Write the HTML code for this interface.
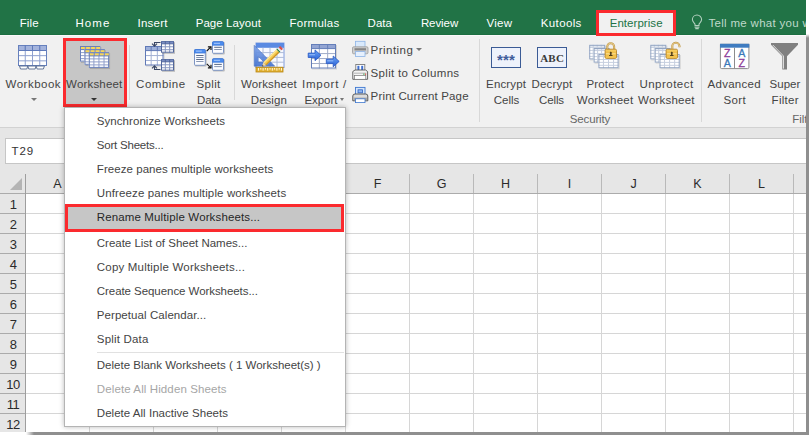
<!DOCTYPE html>
<html><head><meta charset="utf-8"><title>Excel</title>
<style>
html,body{margin:0;padding:0;background:#fff;}
body{width:809px;height:435px;overflow:hidden;position:relative;font-family:"Liberation Sans",sans-serif;}
#app{position:absolute;left:0;top:0;width:806px;height:432px;overflow:hidden;background:#fff;}
#app div{box-sizing:border-box;}
.t{position:absolute;white-space:pre;line-height:16px;height:16px;font-family:"Liberation Sans",sans-serif;}
.z{z-index:6;}
.ch{position:absolute;top:174px;width:64px;height:19px;line-height:20px;text-align:center;font-size:12.5px;color:#2b2b2b;}
.rn{position:absolute;left:0;width:26px;height:19px;line-height:22px;text-align:center;font-size:13px;letter-spacing:-0.5px;color:#2b2b2b;}
.sep{position:absolute;width:1px;background:#d8d8d8;}
.arr{position:absolute;width:0;height:0;border-left:3px solid transparent;border-right:3px solid transparent;border-top:3px solid #666;}
</style></head><body>
<!-- drop shadow of the screenshot -->
<div style="position:absolute;left:806px;top:34px;width:3px;height:401px;background:linear-gradient(#ffffff 0px,#8f8f8f 4px,#8f8f8f 100%)"></div>
<div style="position:absolute;left:26px;top:432px;width:783px;height:3px;background:linear-gradient(90deg,#ffffff 0px,#8f8f8f 8px,#8f8f8f 100%)"></div>
<div id="app">
<!-- title/tab bar -->
<div style="position:absolute;left:0;top:0;width:806px;height:35px;background:#217346"></div>
<div style="position:absolute;left:0;top:34px;width:806px;height:1px;background:#1c6e41"></div>
<!-- ribbon -->
<div style="position:absolute;left:0;top:35px;width:806px;height:92px;background:#f1f1f1"></div>
<div style="position:absolute;left:0;top:35px;width:806px;height:1px;background:#faf8f9"></div>
<div style="position:absolute;left:0;top:127px;width:806px;height:1px;background:#d2d2d2"></div>
<div style="position:absolute;left:0;top:128px;width:806px;height:66px;background:#e6e6e6"></div>
<!-- formula bar -->
<div style="position:absolute;left:5px;top:138px;width:801px;height:26px;background:#fff;border:1px solid #c6c6c6;border-right:none"></div>
<!-- header -->
<div style="position:absolute;left:0;top:193px;width:806px;height:1px;background:#ababab"></div>
<div style="position:absolute;left:0;top:194px;width:25px;height:238px;background:#e6e6e6"></div>
<div style="position:absolute;left:25px;top:174px;width:1px;height:258px;background:#9e9e9e"></div>
<div style="position:absolute;left:10px;top:178px;width:0;height:0;border-left:12px solid transparent;border-bottom:12px solid #b4b4b4"></div>
<div class="ch" style="left:25.5px">A</div>
<div class="ch" style="left:89.5px">B</div>
<div class="ch" style="left:153.5px">C</div>
<div class="ch" style="left:217.5px">D</div>
<div class="ch" style="left:281.5px">E</div>
<div class="ch" style="left:345.5px">F</div>
<div class="ch" style="left:409.5px">G</div>
<div class="ch" style="left:473.5px">H</div>
<div class="ch" style="left:537.5px">I</div>
<div class="ch" style="left:601.5px">J</div>
<div class="ch" style="left:665.5px">K</div>
<div class="ch" style="left:729.5px">L</div>
<div style="position:absolute;left:89px;top:174px;width:1px;height:19px;background:#b9b9b9"></div>
<div style="position:absolute;left:89px;top:194px;width:1px;height:238px;background:#d6d6d6"></div>
<div style="position:absolute;left:153px;top:174px;width:1px;height:19px;background:#b9b9b9"></div>
<div style="position:absolute;left:153px;top:194px;width:1px;height:238px;background:#d6d6d6"></div>
<div style="position:absolute;left:217px;top:174px;width:1px;height:19px;background:#b9b9b9"></div>
<div style="position:absolute;left:217px;top:194px;width:1px;height:238px;background:#d6d6d6"></div>
<div style="position:absolute;left:281px;top:174px;width:1px;height:19px;background:#b9b9b9"></div>
<div style="position:absolute;left:281px;top:194px;width:1px;height:238px;background:#d6d6d6"></div>
<div style="position:absolute;left:345px;top:174px;width:1px;height:19px;background:#b9b9b9"></div>
<div style="position:absolute;left:345px;top:194px;width:1px;height:238px;background:#d6d6d6"></div>
<div style="position:absolute;left:409px;top:174px;width:1px;height:19px;background:#b9b9b9"></div>
<div style="position:absolute;left:409px;top:194px;width:1px;height:238px;background:#d6d6d6"></div>
<div style="position:absolute;left:473px;top:174px;width:1px;height:19px;background:#b9b9b9"></div>
<div style="position:absolute;left:473px;top:194px;width:1px;height:238px;background:#d6d6d6"></div>
<div style="position:absolute;left:537px;top:174px;width:1px;height:19px;background:#b9b9b9"></div>
<div style="position:absolute;left:537px;top:194px;width:1px;height:238px;background:#d6d6d6"></div>
<div style="position:absolute;left:601px;top:174px;width:1px;height:19px;background:#b9b9b9"></div>
<div style="position:absolute;left:601px;top:194px;width:1px;height:238px;background:#d6d6d6"></div>
<div style="position:absolute;left:665px;top:174px;width:1px;height:19px;background:#b9b9b9"></div>
<div style="position:absolute;left:665px;top:194px;width:1px;height:238px;background:#d6d6d6"></div>
<div style="position:absolute;left:729px;top:174px;width:1px;height:19px;background:#b9b9b9"></div>
<div style="position:absolute;left:729px;top:194px;width:1px;height:238px;background:#d6d6d6"></div>
<div style="position:absolute;left:793px;top:174px;width:1px;height:19px;background:#b9b9b9"></div>
<div style="position:absolute;left:793px;top:194px;width:1px;height:238px;background:#d6d6d6"></div>
<div style="position:absolute;left:26px;top:213px;width:780px;height:1px;background:#d6d6d6"></div>
<div style="position:absolute;left:0;top:213px;width:25px;height:1px;background:#ababab"></div>
<div class="rn" style="top:194px">1</div>
<div style="position:absolute;left:26px;top:233px;width:780px;height:1px;background:#d6d6d6"></div>
<div style="position:absolute;left:0;top:233px;width:25px;height:1px;background:#ababab"></div>
<div class="rn" style="top:214px">2</div>
<div style="position:absolute;left:26px;top:253px;width:780px;height:1px;background:#d6d6d6"></div>
<div style="position:absolute;left:0;top:253px;width:25px;height:1px;background:#ababab"></div>
<div class="rn" style="top:234px">3</div>
<div style="position:absolute;left:26px;top:273px;width:780px;height:1px;background:#d6d6d6"></div>
<div style="position:absolute;left:0;top:273px;width:25px;height:1px;background:#ababab"></div>
<div class="rn" style="top:254px">4</div>
<div style="position:absolute;left:26px;top:293px;width:780px;height:1px;background:#d6d6d6"></div>
<div style="position:absolute;left:0;top:293px;width:25px;height:1px;background:#ababab"></div>
<div class="rn" style="top:274px">5</div>
<div style="position:absolute;left:26px;top:313px;width:780px;height:1px;background:#d6d6d6"></div>
<div style="position:absolute;left:0;top:313px;width:25px;height:1px;background:#ababab"></div>
<div class="rn" style="top:294px">6</div>
<div style="position:absolute;left:26px;top:333px;width:780px;height:1px;background:#d6d6d6"></div>
<div style="position:absolute;left:0;top:333px;width:25px;height:1px;background:#ababab"></div>
<div class="rn" style="top:314px">7</div>
<div style="position:absolute;left:26px;top:353px;width:780px;height:1px;background:#d6d6d6"></div>
<div style="position:absolute;left:0;top:353px;width:25px;height:1px;background:#ababab"></div>
<div class="rn" style="top:334px">8</div>
<div style="position:absolute;left:26px;top:373px;width:780px;height:1px;background:#d6d6d6"></div>
<div style="position:absolute;left:0;top:373px;width:25px;height:1px;background:#ababab"></div>
<div class="rn" style="top:354px">9</div>
<div style="position:absolute;left:26px;top:393px;width:780px;height:1px;background:#d6d6d6"></div>
<div style="position:absolute;left:0;top:393px;width:25px;height:1px;background:#ababab"></div>
<div class="rn" style="top:374px">10</div>
<div style="position:absolute;left:26px;top:413px;width:780px;height:1px;background:#d6d6d6"></div>
<div style="position:absolute;left:0;top:413px;width:25px;height:1px;background:#ababab"></div>
<div class="rn" style="top:394px">11</div>
<div style="position:absolute;left:26px;top:433px;width:780px;height:1px;background:#d6d6d6"></div>
<div style="position:absolute;left:0;top:433px;width:25px;height:1px;background:#ababab"></div>
<div class="rn" style="top:414px">12</div>
<!-- Enterprise tab -->
<div style="position:absolute;left:596px;top:10px;width:80px;height:26px;background:#f1f1f1;border:3px solid #fb2a2e;border-bottom-width:3px"></div>
<!-- Worksheet button highlighted -->
<div style="position:absolute;left:63px;top:38px;width:64px;height:69px;background:#c6c6c6;border:3px solid #fb2a2e"></div>
<!-- ribbon separators -->
<div class="sep" style="left:129px;top:45px;height:55px"></div>
<div class="sep" style="left:234px;top:45px;height:55px"></div>
<div class="sep" style="left:479px;top:39px;height:83px"></div>
<div class="sep" style="left:701px;top:39px;height:83px"></div>
<!-- dropdown arrows -->
<div class="arr" style="left:31px;top:98px;border-top-color:#777"></div>
<div class="arr" style="left:91px;top:98px;border-top-color:#333"></div>
<div class="arr" style="left:339.5px;top:98px;border-top-color:#777;border-left-width:2.5px;border-right-width:2.5px"></div>
<div class="arr" style="left:416px;top:48px;border-top-color:#777"></div>
<div class="t" style="left:792.2px;top:111px;color:#666;font-size:11.5px">Filter</div>
<svg width="806" height="432" viewBox="0 0 806 432" style="position:absolute;left:0;top:0">
<g opacity="1"><rect x="18" y="45" width="29" height="21" fill="#ffffff"/><rect x="18" y="45" width="29" height="5.5" fill="#a3b3dc"/><line x1="25.25" y1="45" x2="25.25" y2="66" stroke="#8fa1cf" stroke-width="1"/><line x1="32.50" y1="45" x2="32.50" y2="66" stroke="#8fa1cf" stroke-width="1"/><line x1="39.75" y1="45" x2="39.75" y2="66" stroke="#8fa1cf" stroke-width="1"/><line x1="18" y1="50.50" x2="47" y2="50.50" stroke="#5f7abb" stroke-width="1"/><line x1="18" y1="55.67" x2="47" y2="55.67" stroke="#8fa1cf" stroke-width="1"/><line x1="18" y1="60.83" x2="47" y2="60.83" stroke="#8fa1cf" stroke-width="1"/><rect x="18.5" y="45.5" width="28" height="20" fill="none" stroke="#6680bd" stroke-width="1"/></g>
<line x1="25.25" y1="45" x2="25.25" y2="50.5" stroke="#5f7abb" stroke-width="1"/>
<line x1="32.50" y1="45" x2="32.50" y2="50.5" stroke="#5f7abb" stroke-width="1"/>
<line x1="39.75" y1="45" x2="39.75" y2="50.5" stroke="#5f7abb" stroke-width="1"/>
<path d="M19.5 66 L20.5 69 L26.8 69 L27.8 66 Z" fill="#fff" stroke="#55698f" stroke-width="0.9"/>
<path d="M27.8 66 L28.8 69 L35.1 69 L36.1 66 Z" fill="#fff" stroke="#55698f" stroke-width="0.9"/>
<path d="M36.1 66 L37.1 69 L43.4 69 L44.400000000000006 66 Z" fill="#fff" stroke="#55698f" stroke-width="0.9"/>
<rect x="81" y="47" width="20.3" height="15.8" fill="#6e6e6e" opacity="0.35"/>
<g opacity="1"><rect x="80" y="46" width="20.299999999999997" height="15.600000000000001" fill="#ffffff"/><rect x="80" y="46" width="20.299999999999997" height="3.6" fill="#7a8fc6"/><line x1="85.08" y1="46" x2="85.08" y2="61.6" stroke="#8f9fcb" stroke-width="1"/><line x1="90.15" y1="46" x2="90.15" y2="61.6" stroke="#8f9fcb" stroke-width="1"/><line x1="95.22" y1="46" x2="95.22" y2="61.6" stroke="#8f9fcb" stroke-width="1"/><line x1="80" y1="49.60" x2="100.3" y2="49.60" stroke="#6a80ba" stroke-width="1"/><line x1="80" y1="52.60" x2="100.3" y2="52.60" stroke="#8f9fcb" stroke-width="1"/><line x1="80" y1="55.60" x2="100.3" y2="55.60" stroke="#8f9fcb" stroke-width="1"/><line x1="80" y1="58.60" x2="100.3" y2="58.60" stroke="#8f9fcb" stroke-width="1"/><rect x="80.5" y="46.5" width="19.299999999999997" height="14.600000000000001" fill="none" stroke="#6a80ba" stroke-width="1"/></g>
<rect x="81.0" y="47" width="3.8" height="2" fill="#f8d65a"/>
<rect x="86.1" y="47" width="3.8" height="2" fill="#f8d65a"/>
<rect x="91.1" y="47" width="3.8" height="2" fill="#f8d65a"/>
<rect x="96.2" y="47" width="3.8" height="2" fill="#f8d65a"/>
<rect x="85.5" y="50.2" width="20.3" height="15.8" fill="#6e6e6e" opacity="0.35"/>
<g opacity="1"><rect x="84.5" y="49.2" width="20.299999999999997" height="15.599999999999994" fill="#ffffff"/><rect x="84.5" y="49.2" width="20.299999999999997" height="3.6" fill="#7a8fc6"/><line x1="89.58" y1="49.2" x2="89.58" y2="64.8" stroke="#8f9fcb" stroke-width="1"/><line x1="94.65" y1="49.2" x2="94.65" y2="64.8" stroke="#8f9fcb" stroke-width="1"/><line x1="99.72" y1="49.2" x2="99.72" y2="64.8" stroke="#8f9fcb" stroke-width="1"/><line x1="84.5" y1="52.80" x2="104.8" y2="52.80" stroke="#6a80ba" stroke-width="1"/><line x1="84.5" y1="55.80" x2="104.8" y2="55.80" stroke="#8f9fcb" stroke-width="1"/><line x1="84.5" y1="58.80" x2="104.8" y2="58.80" stroke="#8f9fcb" stroke-width="1"/><line x1="84.5" y1="61.80" x2="104.8" y2="61.80" stroke="#8f9fcb" stroke-width="1"/><rect x="85.0" y="49.7" width="19.299999999999997" height="14.599999999999994" fill="none" stroke="#6a80ba" stroke-width="1"/></g>
<rect x="85.5" y="50.2" width="3.8" height="2" fill="#f8d65a"/>
<rect x="90.6" y="50.2" width="3.8" height="2" fill="#f8d65a"/>
<rect x="95.6" y="50.2" width="3.8" height="2" fill="#f8d65a"/>
<rect x="100.7" y="50.2" width="3.8" height="2" fill="#f8d65a"/>
<rect x="89.8" y="53.3" width="20.3" height="15.8" fill="#6e6e6e" opacity="0.35"/>
<g opacity="1"><rect x="88.8" y="52.3" width="20.299999999999997" height="15.599999999999994" fill="#ffffff"/><rect x="88.8" y="52.3" width="20.299999999999997" height="3.6" fill="#7a8fc6"/><line x1="93.88" y1="52.3" x2="93.88" y2="67.89999999999999" stroke="#8f9fcb" stroke-width="1"/><line x1="98.95" y1="52.3" x2="98.95" y2="67.89999999999999" stroke="#8f9fcb" stroke-width="1"/><line x1="104.02" y1="52.3" x2="104.02" y2="67.89999999999999" stroke="#8f9fcb" stroke-width="1"/><line x1="88.8" y1="55.90" x2="109.1" y2="55.90" stroke="#6a80ba" stroke-width="1"/><line x1="88.8" y1="58.90" x2="109.1" y2="58.90" stroke="#8f9fcb" stroke-width="1"/><line x1="88.8" y1="61.90" x2="109.1" y2="61.90" stroke="#8f9fcb" stroke-width="1"/><line x1="88.8" y1="64.90" x2="109.1" y2="64.90" stroke="#8f9fcb" stroke-width="1"/><rect x="89.3" y="52.8" width="19.299999999999997" height="14.599999999999994" fill="none" stroke="#6a80ba" stroke-width="1"/></g>
<rect x="89.8" y="53.3" width="3.8" height="2" fill="#f8d65a"/>
<rect x="94.9" y="53.3" width="3.8" height="2" fill="#f8d65a"/>
<rect x="99.9" y="53.3" width="3.8" height="2" fill="#f8d65a"/>
<rect x="105.0" y="53.3" width="3.8" height="2" fill="#f8d65a"/>
<rect x="146" y="47" width="18.5" height="19.5" fill="#666" opacity="0.25"/>
<g opacity="1"><rect x="145" y="46" width="18.5" height="19.5" fill="#ffffff"/><rect x="145" y="46" width="18.5" height="4.6" fill="#9db0da"/><line x1="151.17" y1="46" x2="151.17" y2="65.5" stroke="#a3b1d4" stroke-width="1"/><line x1="157.33" y1="46" x2="157.33" y2="65.5" stroke="#a3b1d4" stroke-width="1"/><line x1="145" y1="50.60" x2="163.5" y2="50.60" stroke="#6079b6" stroke-width="1"/><line x1="145" y1="55.57" x2="163.5" y2="55.57" stroke="#a3b1d4" stroke-width="1"/><line x1="145" y1="60.53" x2="163.5" y2="60.53" stroke="#a3b1d4" stroke-width="1"/><rect x="145.5" y="46.5" width="17.5" height="18.5" fill="none" stroke="#6079b6" stroke-width="1"/></g>
<line x1="151.17" y1="46" x2="151.17" y2="50.6" stroke="#6079b6" stroke-width="1"/>
<line x1="157.33" y1="46" x2="157.33" y2="50.6" stroke="#6079b6" stroke-width="1"/>
<rect x="162" y="42.2" width="13" height="11.6" fill="#555" opacity="0.35"/>
<g opacity="1"><rect x="161" y="41.2" width="13" height="11.5" fill="#ffffff"/><rect x="161" y="41.2" width="13" height="2.6" fill="#8297cc"/><line x1="165.33" y1="41.2" x2="165.33" y2="52.7" stroke="#8797c0" stroke-width="1"/><line x1="169.67" y1="41.2" x2="169.67" y2="52.7" stroke="#8797c0" stroke-width="1"/><line x1="161" y1="43.80" x2="174" y2="43.80" stroke="#52679c" stroke-width="1"/><line x1="161" y1="46.77" x2="174" y2="46.77" stroke="#8797c0" stroke-width="1"/><line x1="161" y1="49.73" x2="174" y2="49.73" stroke="#8797c0" stroke-width="1"/><rect x="161.5" y="41.7" width="12" height="10.5" fill="none" stroke="#52679c" stroke-width="1"/></g>
<line x1="165.33" y1="41.2" x2="165.33" y2="43.800000000000004" stroke="#52679c" stroke-width="1"/>
<line x1="169.67" y1="41.2" x2="169.67" y2="43.800000000000004" stroke="#52679c" stroke-width="1"/>
<rect x="162" y="60.2" width="13" height="11.6" fill="#555" opacity="0.35"/>
<g opacity="1"><rect x="161" y="59.2" width="13" height="11.5" fill="#ffffff"/><rect x="161" y="59.2" width="13" height="2.6" fill="#8297cc"/><line x1="165.33" y1="59.2" x2="165.33" y2="70.7" stroke="#8797c0" stroke-width="1"/><line x1="169.67" y1="59.2" x2="169.67" y2="70.7" stroke="#8797c0" stroke-width="1"/><line x1="161" y1="61.80" x2="174" y2="61.80" stroke="#52679c" stroke-width="1"/><line x1="161" y1="64.77" x2="174" y2="64.77" stroke="#8797c0" stroke-width="1"/><line x1="161" y1="67.73" x2="174" y2="67.73" stroke="#8797c0" stroke-width="1"/><rect x="161.5" y="59.7" width="12" height="10.5" fill="none" stroke="#52679c" stroke-width="1"/></g>
<line x1="165.33" y1="59.2" x2="165.33" y2="61.800000000000004" stroke="#52679c" stroke-width="1"/>
<line x1="169.67" y1="59.2" x2="169.67" y2="61.800000000000004" stroke="#52679c" stroke-width="1"/>
<path d="M160.5 42.5 H154.5 V46" fill="none" stroke="#3a4766" stroke-width="1.1"/><path d="M152 43.6 L154.5 46.2 L157 43.6" fill="none" stroke="#3a4766" stroke-width="1.2"/>
<path d="M160.5 69.5 H154.5 V66" fill="none" stroke="#3a4766" stroke-width="1.1"/><path d="M152 68.4 L154.5 65.8 L157 68.4" fill="none" stroke="#3a4766" stroke-width="1.2"/>
<rect x="194.8" y="49.8" width="11.800000000000011" height="16.799999999999997" rx="1" fill="#444" opacity="0.3"/><rect x="194.5" y="49.5" width="10.800000000000011" height="15.799999999999997" rx="1" fill="#fbfcff" stroke="#7d95c4" stroke-width="1"/><path d="M194.5 53 V50.5 Q194.5 49.5 195.5 49.5 H204.3 Q205.3 49.5 205.3 50.5 V53 Z" fill="#4d8df0" stroke="#3f78d8" stroke-width="0.8"/><rect x="196" y="50.6" width="5.800000000000011" height="1" fill="#a9c8fa"/><rect x="196.2" y="55.0" width="7.400000000000011" height="1" fill="#5a6a86"/><rect x="196.2" y="57.0" width="7.400000000000011" height="1" fill="#8796b2"/><rect x="196.2" y="59.0" width="7.400000000000011" height="1" fill="#5a6a86"/><rect x="196.2" y="61.0" width="7.400000000000011" height="1" fill="#8796b2"/>
<rect x="212.8" y="42.0" width="12" height="12.599999999999994" rx="1" fill="#444" opacity="0.3"/><rect x="212.5" y="41.7" width="11" height="11.599999999999994" rx="1" fill="#fbfcff" stroke="#7d95c4" stroke-width="1"/><path d="M212.5 45.2 V42.7 Q212.5 41.7 213.5 41.7 H222.5 Q223.5 41.7 223.5 42.7 V45.2 Z" fill="#4d8df0" stroke="#3f78d8" stroke-width="0.8"/><rect x="214" y="42.800000000000004" width="6" height="1" fill="#a9c8fa"/><rect x="214.2" y="46.8" width="7.6" height="1" fill="#5a6a86"/><rect x="214.2" y="49.0" width="7.6" height="1" fill="#8796b2"/>
<rect x="212.8" y="59.0" width="12" height="12.599999999999994" rx="1" fill="#444" opacity="0.3"/><rect x="212.5" y="58.7" width="11" height="11.599999999999994" rx="1" fill="#fbfcff" stroke="#7d95c4" stroke-width="1"/><path d="M212.5 62.2 V59.7 Q212.5 58.7 213.5 58.7 H222.5 Q223.5 58.7 223.5 59.7 V62.2 Z" fill="#4d8df0" stroke="#3f78d8" stroke-width="0.8"/><rect x="214" y="59.800000000000004" width="6" height="1" fill="#a9c8fa"/><rect x="214.2" y="63.900000000000006" width="7.6" height="1" fill="#5a6a86"/><rect x="214.2" y="66.1" width="7.6" height="1" fill="#8796b2"/>
<path d="M206.8 51 L210.6 47.2" stroke="#111" stroke-width="1.1"/><path d="M207.9 46.9 H211 V50" fill="none" stroke="#111" stroke-width="1.2"/>
<path d="M206.8 63.8 L210.6 67.6" stroke="#111" stroke-width="1.1"/><path d="M207.9 67.9 H211 V64.8" fill="none" stroke="#111" stroke-width="1.2"/>
<rect x="256" y="43" width="28" height="24.5" fill="#f7f9ff" stroke="#7f9ce0" stroke-width="1"/>
<rect x="256" y="43" width="28" height="4.8" fill="#5a8ae2"/>
<line x1="263" y1="47.8" x2="263" y2="67" stroke="#aebbd8" stroke-width="1"/>
<line x1="270" y1="47.8" x2="270" y2="67" stroke="#aebbd8" stroke-width="1"/>
<line x1="277" y1="47.8" x2="277" y2="67" stroke="#aebbd8" stroke-width="1"/>
<line x1="256" y1="52.6" x2="284" y2="52.6" stroke="#aebbd8" stroke-width="1"/>
<line x1="256" y1="57.4" x2="284" y2="57.4" stroke="#aebbd8" stroke-width="1"/>
<line x1="256" y1="62.2" x2="284" y2="62.2" stroke="#aebbd8" stroke-width="1"/>
<defs><linearGradient id="tri" x1="0" y1="0" x2="0" y2="1"><stop offset="0" stop-color="#7da2e8"/><stop offset="1" stop-color="#4272d0"/></linearGradient></defs>
<path d="M254.2 45.3 L254.2 66.2 L274.8 66.2 Z M258.2 56.3 L258.2 62 L263.8 62 Z" fill="url(#tri)" fill-rule="evenodd" opacity="0.9" stroke="#3d68bd" stroke-width="0.6"/>
<g transform="translate(262 66.6) rotate(-44.5)"><path d="M0 0 L4 -2.1 L4 2.1 Z" fill="#f3d6a0"/><path d="M0 0 L1.5 -0.8 L1.5 0.8 Z" fill="#222"/><rect x="4" y="-2.1" width="18.4" height="4.2" fill="#f6c84a"/><rect x="4" y="-2.1" width="18.4" height="1.4" fill="#fbe493"/><rect x="4" y="0.9" width="18.4" height="1.2" fill="#c9922a"/><rect x="22.4" y="-2.1" width="1.3" height="4.2" fill="#2f8a4c"/><rect x="23.7" y="-2.1" width="1.5" height="4.2" fill="#e8e8e8"/><rect x="25.2" y="-2.1" width="2.3" height="4.2" rx="0.8" fill="#d9534f"/></g>
<rect x="256" y="67.2" width="27" height="4.8" fill="#e2b234" stroke="#b88612" stroke-width="0.8"/>
<rect x="258.0" y="68" width="1" height="2.6" fill="#fff6d8"/>
<rect x="260.3" y="68" width="1" height="1.6" fill="#fff6d8"/>
<rect x="262.6" y="68" width="1" height="2.6" fill="#fff6d8"/>
<rect x="264.9" y="68" width="1" height="1.6" fill="#fff6d8"/>
<rect x="267.2" y="68" width="1" height="2.6" fill="#fff6d8"/>
<rect x="269.5" y="68" width="1" height="1.6" fill="#fff6d8"/>
<rect x="271.8" y="68" width="1" height="2.6" fill="#fff6d8"/>
<rect x="274.1" y="68" width="1" height="1.6" fill="#fff6d8"/>
<rect x="276.4" y="68" width="1" height="2.6" fill="#fff6d8"/>
<rect x="278.7" y="68" width="1" height="1.6" fill="#fff6d8"/>
<rect x="281.0" y="68" width="1" height="2.6" fill="#fff6d8"/>
<rect x="312" y="45" width="25" height="24.5" fill="#666" opacity="0.22"/>
<g opacity="1"><rect x="311" y="44" width="25" height="24.5" fill="#ffffff"/><rect x="311" y="44" width="25" height="4.6" fill="#93a5d3"/><line x1="319.33" y1="44" x2="319.33" y2="68.5" stroke="#a0acc8" stroke-width="1"/><line x1="327.67" y1="44" x2="327.67" y2="68.5" stroke="#a0acc8" stroke-width="1"/><line x1="311" y1="48.60" x2="336" y2="48.60" stroke="#647eb9" stroke-width="1"/><line x1="311" y1="53.58" x2="336" y2="53.58" stroke="#a0acc8" stroke-width="1"/><line x1="311" y1="58.55" x2="336" y2="58.55" stroke="#a0acc8" stroke-width="1"/><line x1="311" y1="63.52" x2="336" y2="63.52" stroke="#a0acc8" stroke-width="1"/><rect x="311.5" y="44.5" width="24" height="23.5" fill="none" stroke="#647eb9" stroke-width="1"/></g>
<line x1="319.33" y1="44" x2="319.33" y2="48.6" stroke="#647eb9" stroke-width="1"/>
<line x1="327.67" y1="44" x2="327.67" y2="48.6" stroke="#647eb9" stroke-width="1"/>
<defs><linearGradient id="ag" x1="0" y1="0" x2="0" y2="1"><stop offset="0" stop-color="#6aa3f4"/><stop offset="1" stop-color="#2c62d6"/></linearGradient><linearGradient id="gold" x1="0" y1="0" x2="0" y2="1"><stop offset="0" stop-color="#f9d46a"/><stop offset="0.5" stop-color="#efb83a"/><stop offset="1" stop-color="#f6cc5c"/></linearGradient></defs>
<path d="M308.2 53.099999999999994 H315 V49.9 L321 55.3 L315 60.699999999999996 V57.5 H308.2 Z" fill="url(#ag)" stroke="#2457c4" stroke-width="0.8"/><rect x="309.2" y="54.099999999999994" width="5.800000000000011" height="1.2" fill="#9cc3fb" opacity="0.8"/>
<path d="M326.3 59.199999999999996 H333.2 V56.0 L339.2 61.4 L333.2 66.8 V63.6 H326.3 Z" fill="url(#ag)" stroke="#2457c4" stroke-width="0.8"/><rect x="327.3" y="60.199999999999996" width="5.899999999999977" height="1.2" fill="#9cc3fb" opacity="0.8"/>
<rect x="355.5" y="41.3" width="9.5" height="7" fill="#d9e9fb" stroke="#8db4e6" stroke-width="0.8"/>
<rect x="352.5" y="46.8" width="15.5" height="7" rx="1.2" fill="#cfcfcf" stroke="#9a9a9a" stroke-width="0.8"/>
<rect x="354.5" y="48.2" width="11.5" height="2.2" fill="#858585"/>
<rect x="355.5" y="51.6" width="9.5" height="4.8" fill="#e6f0fd" stroke="#8db4e6" stroke-width="0.8"/>
<rect x="355.8" y="64.5" width="9" height="7.5" fill="#fff" stroke="#7a7a7a" stroke-width="0.9"/>
<rect x="357.4" y="65.8" width="2" height="4.4" fill="#3f6fd0"/><rect x="361.2" y="65.8" width="2" height="4.4" fill="#3f6fd0"/>
<path d="M352.8 79.3 V71.5 L355 70 H365.6 L367.6 71.5 V79.3 Z" fill="#f4f4f4" stroke="#555" stroke-width="0.9"/>
<rect x="354.6" y="75.5" width="11.2" height="3.8" fill="#fff" stroke="#777" stroke-width="0.7"/>
<rect x="354" y="72.6" width="12.4" height="1.2" fill="#bdbdbd"/>
<rect x="363.3" y="73.6" width="1.2" height="1.2" fill="#3aa64a"/><rect x="365" y="73.6" width="1.2" height="1.2" fill="#e0483e"/>
<rect x="355.5" y="87.4" width="9.5" height="8" fill="#d5e6fb" stroke="#3f78d0" stroke-width="0.9"/>
<rect x="358" y="89.8" width="4.5" height="3" fill="#8fb6f0" stroke="#2f62c0" stroke-width="0.8"/>
<path d="M352.8 100.8 V96 Q352.8 94 355 94 H365.6 Q367.8 94 367.8 96 V100.8 Z" fill="#dcdcdc" stroke="#4a4a4a" stroke-width="0.9"/>
<rect x="353.6" y="97.6" width="13.4" height="2.6" fill="#a8a8a8"/>
<rect x="355.5" y="98.8" width="9.5" height="3.8" fill="#fff" stroke="#3f78d0" stroke-width="0.8"/>
<rect x="491.5" y="47.5" width="29" height="20" fill="#eef2fb" stroke="#3b5b95" stroke-width="1"/>
<text x="506" y="64.6" font-family="Liberation Sans" font-weight="bold" font-size="15" fill="#3f5d9b" text-anchor="middle" letter-spacing="0.2">***</text>
<rect x="537.5" y="47.5" width="29" height="20" fill="#eef2fb" stroke="#3b5b95" stroke-width="1"/>
<text x="552.2" y="61.7" font-family="Liberation Serif" font-weight="bold" font-size="11" fill="#3a3a3a" text-anchor="middle" letter-spacing="0.3">ABC</text>
<rect x="590.2" y="45.8" width="16" height="14.6" fill="#777" opacity="0.25"/><g opacity="1"><rect x="589.2" y="44.8" width="16.0" height="14.600000000000001" fill="#ffffff"/><rect x="589.2" y="44.8" width="16.0" height="2.6" fill="#e6ebf3"/><line x1="593.20" y1="44.8" x2="593.20" y2="59.4" stroke="#c6cfdf" stroke-width="1"/><line x1="597.20" y1="44.8" x2="597.20" y2="59.4" stroke="#c6cfdf" stroke-width="1"/><line x1="601.20" y1="44.8" x2="601.20" y2="59.4" stroke="#c6cfdf" stroke-width="1"/><line x1="589.2" y1="47.40" x2="605.2" y2="47.40" stroke="#c6cfdf" stroke-width="1"/><line x1="589.2" y1="50.40" x2="605.2" y2="50.40" stroke="#c6cfdf" stroke-width="1"/><line x1="589.2" y1="53.40" x2="605.2" y2="53.40" stroke="#c6cfdf" stroke-width="1"/><line x1="589.2" y1="56.40" x2="605.2" y2="56.40" stroke="#c6cfdf" stroke-width="1"/><rect x="589.7" y="45.3" width="15.0" height="13.600000000000001" fill="none" stroke="#93a5c2" stroke-width="1"/></g><rect x="594.6" y="49" width="16" height="14.6" fill="#777" opacity="0.25"/><g opacity="1"><rect x="593.6" y="48" width="16.0" height="14.600000000000001" fill="#ffffff"/><rect x="593.6" y="48" width="16.0" height="2.6" fill="#e6ebf3"/><line x1="597.60" y1="48" x2="597.60" y2="62.6" stroke="#c6cfdf" stroke-width="1"/><line x1="601.60" y1="48" x2="601.60" y2="62.6" stroke="#c6cfdf" stroke-width="1"/><line x1="605.60" y1="48" x2="605.60" y2="62.6" stroke="#c6cfdf" stroke-width="1"/><line x1="593.6" y1="50.60" x2="609.6" y2="50.60" stroke="#c6cfdf" stroke-width="1"/><line x1="593.6" y1="53.60" x2="609.6" y2="53.60" stroke="#c6cfdf" stroke-width="1"/><line x1="593.6" y1="56.60" x2="609.6" y2="56.60" stroke="#c6cfdf" stroke-width="1"/><line x1="593.6" y1="59.60" x2="609.6" y2="59.60" stroke="#c6cfdf" stroke-width="1"/><rect x="594.1" y="48.5" width="15.0" height="13.600000000000001" fill="none" stroke="#93a5c2" stroke-width="1"/></g><rect x="599.4" y="55" width="20.2" height="14.2" fill="#777" opacity="0.25"/><g opacity="1"><rect x="598.4" y="54" width="20.200000000000045" height="14.200000000000003" fill="#ffffff"/><rect x="598.4" y="54" width="20.200000000000045" height="2.6" fill="#e6ebf3"/><line x1="603.45" y1="54" x2="603.45" y2="68.2" stroke="#c6cfdf" stroke-width="1"/><line x1="608.50" y1="54" x2="608.50" y2="68.2" stroke="#c6cfdf" stroke-width="1"/><line x1="613.55" y1="54" x2="613.55" y2="68.2" stroke="#c6cfdf" stroke-width="1"/><line x1="598.4" y1="56.60" x2="618.6" y2="56.60" stroke="#c6cfdf" stroke-width="1"/><line x1="598.4" y1="59.50" x2="618.6" y2="59.50" stroke="#c6cfdf" stroke-width="1"/><line x1="598.4" y1="62.40" x2="618.6" y2="62.40" stroke="#c6cfdf" stroke-width="1"/><line x1="598.4" y1="65.30" x2="618.6" y2="65.30" stroke="#c6cfdf" stroke-width="1"/><rect x="598.9" y="54.5" width="19.200000000000045" height="13.200000000000003" fill="none" stroke="#93a5c2" stroke-width="1"/></g>
<path d="M607.3000000000001 49.2 V46.6 A3.4 3.4 0 0 1 614.1 46.6 V49.2" fill="none" stroke="#c29a48" stroke-width="2.1"/><path d="M607.3000000000001 49.2 V46.6 A3.4 3.4 0 0 1 614.1 46.6 V49.2" fill="none" stroke="#f0dba6" stroke-width="0.7"/><rect x="605.1" y="49.2" width="11.4" height="9.2" rx="1.2" fill="url(#gold)" stroke="#b8862a" stroke-width="0.9"/><rect x="605.9000000000001" y="53.2" width="9.8" height="1.2" fill="#fbe39a" opacity="0.9"/><path d="M610.8000000000001 51.4 L612.3000000000001 53.2 H611.5 V55 H612.5 V56 H609.1 V55 H610.1 V53.2 H609.3000000000001 Z" fill="#4a3a18"/>
<rect x="651.3000000000001" y="45.8" width="16" height="14.6" fill="#777" opacity="0.25"/><g opacity="1"><rect x="650.3000000000001" y="44.8" width="16.0" height="14.600000000000001" fill="#ffffff"/><rect x="650.3000000000001" y="44.8" width="16.0" height="2.6" fill="#e6ebf3"/><line x1="654.30" y1="44.8" x2="654.30" y2="59.4" stroke="#c6cfdf" stroke-width="1"/><line x1="658.30" y1="44.8" x2="658.30" y2="59.4" stroke="#c6cfdf" stroke-width="1"/><line x1="662.30" y1="44.8" x2="662.30" y2="59.4" stroke="#c6cfdf" stroke-width="1"/><line x1="650.3000000000001" y1="47.40" x2="666.3000000000001" y2="47.40" stroke="#c6cfdf" stroke-width="1"/><line x1="650.3000000000001" y1="50.40" x2="666.3000000000001" y2="50.40" stroke="#c6cfdf" stroke-width="1"/><line x1="650.3000000000001" y1="53.40" x2="666.3000000000001" y2="53.40" stroke="#c6cfdf" stroke-width="1"/><line x1="650.3000000000001" y1="56.40" x2="666.3000000000001" y2="56.40" stroke="#c6cfdf" stroke-width="1"/><rect x="650.8000000000001" y="45.3" width="15.0" height="13.600000000000001" fill="none" stroke="#93a5c2" stroke-width="1"/></g><rect x="655.7" y="49" width="16" height="14.6" fill="#777" opacity="0.25"/><g opacity="1"><rect x="654.7" y="48" width="16.0" height="14.600000000000001" fill="#ffffff"/><rect x="654.7" y="48" width="16.0" height="2.6" fill="#e6ebf3"/><line x1="658.70" y1="48" x2="658.70" y2="62.6" stroke="#c6cfdf" stroke-width="1"/><line x1="662.70" y1="48" x2="662.70" y2="62.6" stroke="#c6cfdf" stroke-width="1"/><line x1="666.70" y1="48" x2="666.70" y2="62.6" stroke="#c6cfdf" stroke-width="1"/><line x1="654.7" y1="50.60" x2="670.7" y2="50.60" stroke="#c6cfdf" stroke-width="1"/><line x1="654.7" y1="53.60" x2="670.7" y2="53.60" stroke="#c6cfdf" stroke-width="1"/><line x1="654.7" y1="56.60" x2="670.7" y2="56.60" stroke="#c6cfdf" stroke-width="1"/><line x1="654.7" y1="59.60" x2="670.7" y2="59.60" stroke="#c6cfdf" stroke-width="1"/><rect x="655.2" y="48.5" width="15.0" height="13.600000000000001" fill="none" stroke="#93a5c2" stroke-width="1"/></g><rect x="660.5" y="55" width="20.2" height="14.2" fill="#777" opacity="0.25"/><g opacity="1"><rect x="659.5" y="54" width="20.200000000000045" height="14.200000000000003" fill="#ffffff"/><rect x="659.5" y="54" width="20.200000000000045" height="2.6" fill="#e6ebf3"/><line x1="664.55" y1="54" x2="664.55" y2="68.2" stroke="#c6cfdf" stroke-width="1"/><line x1="669.60" y1="54" x2="669.60" y2="68.2" stroke="#c6cfdf" stroke-width="1"/><line x1="674.65" y1="54" x2="674.65" y2="68.2" stroke="#c6cfdf" stroke-width="1"/><line x1="659.5" y1="56.60" x2="679.7" y2="56.60" stroke="#c6cfdf" stroke-width="1"/><line x1="659.5" y1="59.50" x2="679.7" y2="59.50" stroke="#c6cfdf" stroke-width="1"/><line x1="659.5" y1="62.40" x2="679.7" y2="62.40" stroke="#c6cfdf" stroke-width="1"/><line x1="659.5" y1="65.30" x2="679.7" y2="65.30" stroke="#c6cfdf" stroke-width="1"/><rect x="660.0" y="54.5" width="19.200000000000045" height="13.200000000000003" fill="none" stroke="#93a5c2" stroke-width="1"/></g>
<path d="M672.3000000000001 49.2 V46.8 A3.6 3.6 0 0 1 679.5 46 V47.2" fill="none" stroke="#c29a48" stroke-width="2.1"/><path d="M672.3000000000001 49.2 V46.8 A3.6 3.6 0 0 1 679.5 46 V47.2" fill="none" stroke="#f0dba6" stroke-width="0.7"/><rect x="666.1" y="49.2" width="11.4" height="9.2" rx="1.2" fill="url(#gold)" stroke="#b8862a" stroke-width="0.9"/><rect x="666.9000000000001" y="53.2" width="9.8" height="1.2" fill="#fbe39a" opacity="0.9"/><path d="M671.8000000000001 51.4 L673.3000000000001 53.2 H672.5 V55 H673.5 V56 H670.1 V55 H671.1 V53.2 H670.3000000000001 Z" fill="#4a3a18"/>
<path d="M720.4 44.3 H748.9 V67.3 Q748.9 68.6 747.6 68.6 H721.7 Q720.4 68.6 720.4 67.3 Z" fill="#fff" stroke="#8c8c8c" stroke-width="1"/>
<rect x="720" y="43.8" width="29.3" height="3.9" fill="#3f7cc0"/>
<line x1="734.5" y1="47.7" x2="734.5" y2="68.6" stroke="#8c8c8c" stroke-width="1"/>
<text x="727.2" y="56.6" font-family="Liberation Sans" font-size="10.6" fill="#8c3c98" stroke="#8c3c98" stroke-width="0.3" text-anchor="middle">Z</text>
<text x="727.2" y="66.8" font-family="Liberation Sans" font-size="10.6" fill="#3b79b9" stroke="#3b79b9" stroke-width="0.3" text-anchor="middle">A</text>
<text x="741.7" y="56.6" font-family="Liberation Sans" font-size="10.6" fill="#3b79b9" stroke="#3b79b9" stroke-width="0.3" text-anchor="middle">A</text>
<text x="741.7" y="66.8" font-family="Liberation Sans" font-size="10.6" fill="#8c3c98" stroke="#8c3c98" stroke-width="0.3" text-anchor="middle">Z</text>
<path d="M771 43 H798 V44.8 L787 56.3 V69.5 H782.3 V56.3 L771 44.8 Z" fill="#808080"/>
<path d="M772.8 45 L783.5 56 V68.6" fill="none" stroke="#f4f4f4" stroke-width="0.8"/>
<path d="M695 25.6 V24.2 C694.5 22.9 692.4 21.9 692.4 19.6 A4.6 4.6 0 0 1 701.6 19.6 C701.6 21.9 699.5 22.9 699 24.2 V25.6 Z" fill="none" stroke="#b3d0c0" stroke-width="1.05"/>
<path d="M694.6 27.2 H699.4 M695.3 28.6 H698.7" stroke="#b3d0c0" stroke-width="1.1"/>
</svg>
<!-- dropdown menu -->
<div style="position:absolute;left:64px;top:107px;width:281.8px;height:319.5px;background:#fff;border:1px solid #b4b4b4;box-shadow:0 0 5px rgba(0,0,0,0.28);z-index:5"></div>
<div style="position:absolute;left:65px;top:204px;width:279px;height:28px;background:#c6c6c6;border:3px solid #fb2a2e;z-index:5"></div>
<div style="position:absolute;left:97px;top:352px;width:247px;height:1px;background:#e1e1e1;z-index:5"></div>
<div class="t" style="left:19.7px;top:15px;color:#ffffff;font-size:11.5px;letter-spacing:0.12px">File</div>
<div class="t" style="left:75.5px;top:15px;color:#ffffff;font-size:11.5px;letter-spacing:1.04px">Home</div>
<div class="t" style="left:137.6px;top:15px;color:#ffffff;font-size:11.5px;letter-spacing:0.21px">Insert</div>
<div class="t" style="left:195.7px;top:15px;color:#ffffff;font-size:11.5px;letter-spacing:0.06px">Page Layout</div>
<div class="t" style="left:289.6px;top:15px;color:#ffffff;font-size:11.5px;letter-spacing:0.25px">Formulas</div>
<div class="t" style="left:367.6px;top:15px;color:#ffffff;font-size:11.5px;letter-spacing:0.00px">Data</div>
<div class="t" style="left:420.9px;top:15px;color:#ffffff;font-size:11.5px;letter-spacing:-0.08px">Review</div>
<div class="t" style="left:486.4px;top:15px;color:#ffffff;font-size:11.5px;letter-spacing:0.29px">View</div>
<div class="t" style="left:540.8px;top:15px;color:#ffffff;font-size:11.5px;letter-spacing:0.36px">Kutools</div>
<div class="t" style="left:609.7px;top:15px;color:#217346;font-size:11.5px;letter-spacing:0.05px">Enterprise</div>
<div class="t" style="left:708.5px;top:15px;color:#bfd9ca;font-size:11.5px;letter-spacing:0.30px">Tell me what you want to do</div>
<div class="t" style="left:5.6px;top:76px;color:#444444;font-size:11.5px;letter-spacing:0.49px">Workbook</div>
<div class="t" style="left:66.1px;top:76px;color:#444444;font-size:11.5px;letter-spacing:0.17px">Worksheet</div>
<div class="t" style="left:136.1px;top:76px;color:#444444;font-size:11.5px;letter-spacing:0.51px">Combine</div>
<div class="t" style="left:196.6px;top:76px;color:#444444;font-size:11.5px;letter-spacing:0.33px">Split</div>
<div class="t" style="left:197.0px;top:92px;color:#444444;font-size:11.5px;letter-spacing:-0.17px">Data</div>
<div class="t" style="left:240.9px;top:76px;color:#444444;font-size:11.5px;letter-spacing:0.13px">Worksheet</div>
<div class="t" style="left:250.8px;top:92px;color:#444444;font-size:11.5px;letter-spacing:0.04px">Design</div>
<div class="t" style="left:302.0px;top:76px;color:#444444;font-size:11.5px;letter-spacing:0.75px">Import /</div>
<div class="t" style="left:304.4px;top:92px;color:#444444;font-size:11.5px;letter-spacing:-0.03px">Export</div>
<div class="t" style="left:486.1px;top:76px;color:#444444;font-size:11.5px;letter-spacing:0.13px">Encrypt</div>
<div class="t" style="left:493.8px;top:92px;color:#444444;font-size:11.5px;letter-spacing:-0.02px">Cells</div>
<div class="t" style="left:531.4px;top:76px;color:#444444;font-size:11.5px;letter-spacing:0.20px">Decrypt</div>
<div class="t" style="left:539.0px;top:92px;color:#444444;font-size:11.5px;letter-spacing:-0.12px">Cells</div>
<div class="t" style="left:586.4px;top:76px;color:#444444;font-size:11.5px;letter-spacing:0.18px">Protect</div>
<div class="t" style="left:576.8px;top:92px;color:#444444;font-size:11.5px;letter-spacing:0.19px">Worksheet</div>
<div class="t" style="left:639.4px;top:76px;color:#444444;font-size:11.5px;letter-spacing:0.49px">Unprotect</div>
<div class="t" style="left:638.1px;top:92px;color:#444444;font-size:11.5px;letter-spacing:0.20px">Worksheet</div>
<div class="t" style="left:707.6px;top:76px;color:#444444;font-size:11.5px;letter-spacing:0.26px">Advanced</div>
<div class="t" style="left:723.5px;top:92px;color:#444444;font-size:11.5px;letter-spacing:0.34px">Sort</div>
<div class="t" style="left:769.5px;top:76px;color:#444444;font-size:11.5px;letter-spacing:0.03px">Super</div>
<div class="t" style="left:771.6px;top:92px;color:#444444;font-size:11.5px;letter-spacing:0.27px">Filter</div>
<div class="t" style="left:569.8px;top:111px;color:#666666;font-size:11.5px;letter-spacing:-0.15px">Security</div>
<div class="t" style="left:370.6px;top:42px;color:#444444;font-size:11.5px;letter-spacing:0.47px">Printing</div>
<div class="t" style="left:370.6px;top:65px;color:#444444;font-size:11.5px;letter-spacing:0.32px">Split to Columns</div>
<div class="t" style="left:370.6px;top:88px;color:#444444;font-size:11.5px;letter-spacing:0.16px">Print Current Page</div>
<div class="t" style="left:11.4px;top:143px;color:#333333;font-size:11.5px;letter-spacing:0.99px">T29</div>
<div class="t z" style="left:96.8px;top:113px;color:#444444;font-size:11.5px;letter-spacing:0.06px">Synchronize Worksheets</div>
<div class="t z" style="left:96.8px;top:137px;color:#444444;font-size:11.5px;letter-spacing:-0.21px">Sort Sheets...</div>
<div class="t z" style="left:96.8px;top:161px;color:#444444;font-size:11.5px;letter-spacing:0.06px">Freeze panes multiple worksheets</div>
<div class="t z" style="left:96.8px;top:185px;color:#444444;font-size:11.5px;letter-spacing:0.12px">Unfreeze panes multiple worksheets</div>
<div class="t z" style="left:96.8px;top:209px;color:#262626;font-size:11.5px;letter-spacing:0.13px">Rename Multiple Worksheets...</div>
<div class="t z" style="left:96.8px;top:235px;color:#444444;font-size:11.5px;letter-spacing:-0.01px">Create List of Sheet Names...</div>
<div class="t z" style="left:96.8px;top:259px;color:#444444;font-size:11.5px;letter-spacing:0.20px">Copy Multiple Worksheets...</div>
<div class="t z" style="left:96.8px;top:283px;color:#444444;font-size:11.5px;letter-spacing:-0.06px">Create Sequence Worksheets...</div>
<div class="t z" style="left:96.8px;top:307px;color:#444444;font-size:11.5px;letter-spacing:0.07px">Perpetual Calendar...</div>
<div class="t z" style="left:96.8px;top:331px;color:#444444;font-size:11.5px;letter-spacing:0.18px">Split Data</div>
<div class="t z" style="left:96.8px;top:357px;color:#444444;font-size:11.5px;letter-spacing:-0.00px">Delete Blank Worksheets ( 1 Worksheet(s) )</div>
<div class="t z" style="left:96.8px;top:381px;color:#a6a6a6;font-size:11.5px;letter-spacing:0.11px">Delete All Hidden Sheets</div>
<div class="t z" style="left:96.8px;top:405px;color:#444444;font-size:11.5px;letter-spacing:0.03px">Delete All Inactive Sheets</div>
</div>
</body></html>
